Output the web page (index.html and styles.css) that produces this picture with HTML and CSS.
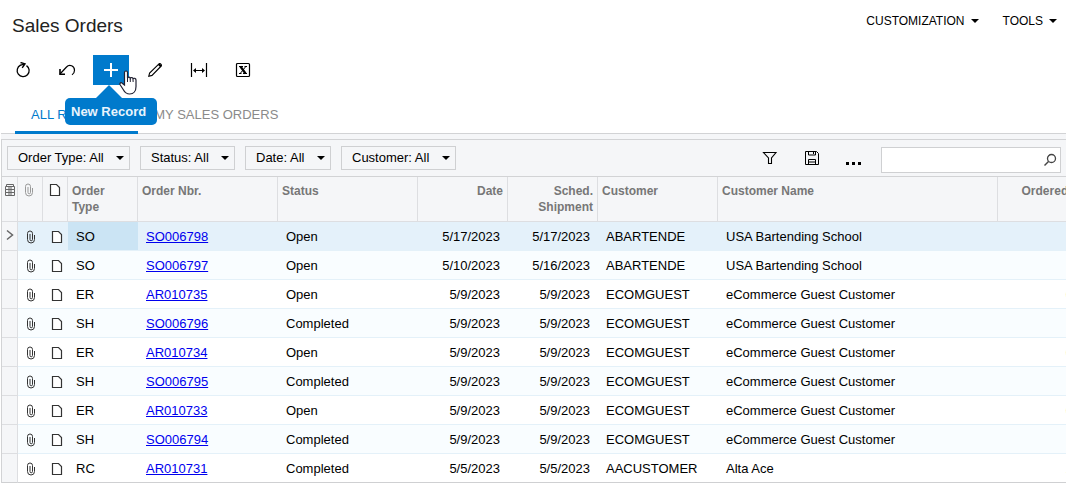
FILE: index.html
```html
<!DOCTYPE html>
<html lang="en">
<head>
    <meta charset="UTF-8">
    <meta name="viewport" content="width=device-width, initial-scale=1.0">
    <title>Sales Orders</title>
    <link rel="stylesheet" href="styles.css">
</head>
<body>
    <!-- shared icons -->
    <svg class="sprite" aria-hidden="true">
        <symbol id="clip" viewBox="0 0 10 14">
            <path d="M1.5 4v5.500a3.300 3.300 0 0 0 7 0V5M6.500 4v5.500a1 1 0 0 1-2.500 0V4M1.500 4.500V3.500a2.500 2.500 0 0 1 5 0V4.500" fill="none" stroke="currentColor"/>
        </symbol>
        <symbol id="note" viewBox="0 0 12 14">
            <path d="M1.500 1.500h6l3 3v8h-9z" fill="#fff" stroke="currentColor" stroke-width="1.200"/>
        </symbol>
    </svg>

    <header class="page-header">
        <h1>Sales Orders</h1>
        <nav class="menus">
            <button class="menu" type="button">CUSTOMIZATION</button>
            <button class="menu" type="button">TOOLS</button>
        </nav>
    </header>

    <div class="toolbar">
        <button class="tool" type="button" aria-label="Refresh">
            <svg width="16" height="16" viewBox="0 0 16 16"><path d="M5.500 3.200A6 6 0 1 0 11.500 3.600" fill="none" stroke="currentColor" stroke-width="1.300"/><path d="M5.500.5 10 1.800 7.200 5.800M5 3.400l4-1.200" fill="none" stroke="currentColor" stroke-width="1.400"/></svg>
        </button>
        <button class="tool" type="button" aria-label="Cancel">
            <svg width="18" height="16" viewBox="0 0 18 16"><path d="M2 12 8.500 5C11.500 1.500 16.500 4 16.500 8.200c0 2-1 3.600-2.500 4.600" fill="none" stroke="currentColor" stroke-width="1.200"/><path d="M2 7v5.200h5" fill="none" stroke="currentColor" stroke-width="1.600"/></svg>
        </button>
        <button class="tool tool-active" type="button" aria-label="New Record" aria-describedby="tip">
            <svg width="16" height="16" viewBox="0 0 16 16"><path d="M8 1v14M1 8h14" stroke="currentColor" stroke-width="2"/></svg>
            <span class="tooltip" id="tip" role="tooltip">New Record</span>
            <svg class="pointer" width="18" height="25" viewBox="0 0 18 25"><path d="M5.500 15V2.500C5.500.5 8.500.5 8.500 2.500V8c.5-1.300 2.600-1.100 2.800.3.600-1.200 2.600-1 2.800.5.700-1 2.900-.6 2.900 1.200v6.500c0 4.500-2.300 7.500-6.300 7.500-3.500 0-5-1.500-6.500-4.500L1 14.500c-.6-1.500 1.200-2.400 2.200-1.300z" fill="#fff" stroke="#223" stroke-width="1.200"/><path d="M8.500 8v4M11.300 8.500V12M14.100 9.500V12" stroke="#223"/></svg>
        </button>
        <button class="tool" type="button" aria-label="Edit">
            <svg width="16" height="16" viewBox="0 0 16 16"><path d="M1.800 14.200l.8-3.200 9.400-9.200c1-1 3.200 1.200 2.200 2.200L5 13.400z" fill="none" stroke="currentColor" stroke-width="1.100"/><path d="M10.800 2.800l2.500 2.500 1.500-1.500-2.500-2.500z" fill="currentColor"/></svg>
        </button>
        <button class="tool" type="button" aria-label="Fit Columns">
            <svg width="18" height="16" viewBox="0 0 18 16"><path d="M1.500 1v14M16.500 1v14M4 8.500h10" fill="none" stroke="currentColor" stroke-width="1.200"/><path d="M3 8.500 6 6v5zM15 8.500 12 6v5z" fill="currentColor"/></svg>
        </button>
        <button class="tool" type="button" aria-label="Export to Excel">
            <svg width="16" height="16" viewBox="0 0 16 16"><rect x="1.500" y="1.500" width="13" height="13" rx="1" fill="none" stroke="currentColor" stroke-width="1.200"/><path d="M4 4.500h4M9.500 4.500H12M4 11.500h2.500M8 11.500h4" stroke="currentColor"/><path d="M5.500 4.500l5 7" stroke="currentColor" stroke-width="2.200"/><path d="M10.800 4.500l-5.600 7" stroke="currentColor"/></svg>
        </button>
    </div>

    <div class="tabs" role="tablist">
        <button class="tab tab-active" type="button" role="tab" aria-selected="true">ALL RECORDS</button>
        <button class="tab" type="button" role="tab" aria-selected="false">MY SALES ORDERS</button>
    </div>

    <main class="grid">
        <div class="filters">
            <div class="filter"><select aria-label="Order Type"><option>Order Type: All</option></select></div>
            <div class="filter"><select aria-label="Status"><option>Status: All</option></select></div>
            <div class="filter"><select aria-label="Date"><option>Date: All</option></select></div>
            <div class="filter"><select aria-label="Customer"><option>Customer: All</option></select></div>
            <div class="filter-tools">
                <button class="filter-tool" type="button" aria-label="Filter Settings">
                    <svg width="16" height="16" viewBox="0 0 16 16"><path d="M1.500 2.500h12.500L9.500 8v5.500H6.500V8z" fill="none" stroke="currentColor" stroke-width="1.100"/></svg>
                </button>
                <button class="filter-tool" type="button" aria-label="Save">
                    <svg width="16" height="16" viewBox="0 0 16 16"><path d="M1.500 1.500h11l2 2v11h-13zM4.500 1.500v3.500h7v-3.500M9.500 2v2M4.500 14.500v-5h7v5M4.500 12h7" fill="none" stroke="currentColor"/></svg>
                </button>
                <button class="filter-tool" type="button" aria-label="More">
                    <svg width="18" height="16" viewBox="0 0 18 16"><path d="M1 12h3v3H1zM7 12h3v3H7zM13 12h3v3h-3z" fill="currentColor"/></svg>
                </button>
            </div>
            <div class="search">
                <input type="text" aria-label="Search">
                <svg width="14" height="14" viewBox="0 0 14 14"><circle cx="8.500" cy="5.500" r="4" fill="none" stroke="currentColor" stroke-width="1.300"/><path d="M5.500 8.500 1.500 12.500" stroke="currentColor" stroke-width="1.500"/></svg>
            </div>
        </div>

        <table>
            <colgroup>
                <col class="w-mark"><col class="w-icon"><col class="w-icon"><col class="w-type"><col class="w-wide"><col class="w-wide">
                <col class="w-date"><col class="w-date"><col class="w-customer"><col class="w-name"><col class="w-qty">
            </colgroup>
            <thead>
                <tr>
                    <th class="mark"><svg width="12" height="14" viewBox="0 0 12 14"><path d="M2.500 3.500v-2h7v2M1.500 3.500h9v3h-9zM1.500 6.500h9v3h-9zM1.500 9.500h9v3h-9zM4 5h4M4 8h4M4 11h4" fill="none" stroke="currentColor"/></svg></th>
                    <th class="icon faded"><svg width="10" height="14"><use href="#clip"/></svg></th>
                    <th class="icon"><svg width="12" height="14"><use href="#note"/></svg></th>
                    <th>Order Type</th>
                    <th>Order Nbr.</th>
                    <th>Status</th>
                    <th class="num">Date</th>
                    <th class="num">Sched. Shipment</th>
                    <th>Customer</th>
                    <th>Customer Name</th>
                    <th class="num">Ordered Qty.</th>
                </tr>
            </thead>
            <tbody>
                <tr class="selected">
                    <td class="mark"><svg width="8" height="12" viewBox="0 0 8 12"><path d="M1 1.500 6.500 6 1 10.500" fill="none" stroke="currentColor" stroke-width="1.500"/></svg></td>
                    <td class="icon"><svg width="10" height="14"><use href="#clip"/></svg></td>
                    <td class="icon"><svg width="12" height="14"><use href="#note"/></svg></td>
                    <td class="current">SO</td><td><a href="#">SO006798</a></td><td>Open</td>
                    <td class="num">5/17/2023</td><td class="num">5/17/2023</td>
                    <td>ABARTENDE</td><td>USA Bartending School</td><td class="num">1.00</td>
                </tr>
                <tr>
                    <td class="mark"></td>
                    <td class="icon"><svg width="10" height="14"><use href="#clip"/></svg></td>
                    <td class="icon"><svg width="12" height="14"><use href="#note"/></svg></td>
                    <td>SO</td><td><a href="#">SO006797</a></td><td>Open</td>
                    <td class="num">5/10/2023</td><td class="num">5/16/2023</td>
                    <td>ABARTENDE</td><td>USA Bartending School</td><td class="num">1.00</td>
                </tr>
                <tr>
                    <td class="mark"></td>
                    <td class="icon"><svg width="10" height="14"><use href="#clip"/></svg></td>
                    <td class="icon"><svg width="12" height="14"><use href="#note"/></svg></td>
                    <td>ER</td><td><a href="#">AR010735</a></td><td>Open</td>
                    <td class="num">5/9/2023</td><td class="num">5/9/2023</td>
                    <td>ECOMGUEST</td><td>eCommerce Guest Customer</td><td class="num">0.00</td>
                </tr>
                <tr>
                    <td class="mark"></td>
                    <td class="icon"><svg width="10" height="14"><use href="#clip"/></svg></td>
                    <td class="icon"><svg width="12" height="14"><use href="#note"/></svg></td>
                    <td>SH</td><td><a href="#">SO006796</a></td><td>Completed</td>
                    <td class="num">5/9/2023</td><td class="num">5/9/2023</td>
                    <td>ECOMGUEST</td><td>eCommerce Guest Customer</td><td class="num">1.00</td>
                </tr>
                <tr>
                    <td class="mark"></td>
                    <td class="icon"><svg width="10" height="14"><use href="#clip"/></svg></td>
                    <td class="icon"><svg width="12" height="14"><use href="#note"/></svg></td>
                    <td>ER</td><td><a href="#">AR010734</a></td><td>Open</td>
                    <td class="num">5/9/2023</td><td class="num">5/9/2023</td>
                    <td>ECOMGUEST</td><td>eCommerce Guest Customer</td><td class="num">0.00</td>
                </tr>
                <tr>
                    <td class="mark"></td>
                    <td class="icon"><svg width="10" height="14"><use href="#clip"/></svg></td>
                    <td class="icon"><svg width="12" height="14"><use href="#note"/></svg></td>
                    <td>SH</td><td><a href="#">SO006795</a></td><td>Completed</td>
                    <td class="num">5/9/2023</td><td class="num">5/9/2023</td>
                    <td>ECOMGUEST</td><td>eCommerce Guest Customer</td><td class="num">1.00</td>
                </tr>
                <tr>
                    <td class="mark"></td>
                    <td class="icon"><svg width="10" height="14"><use href="#clip"/></svg></td>
                    <td class="icon"><svg width="12" height="14"><use href="#note"/></svg></td>
                    <td>ER</td><td><a href="#">AR010733</a></td><td>Open</td>
                    <td class="num">5/9/2023</td><td class="num">5/9/2023</td>
                    <td>ECOMGUEST</td><td>eCommerce Guest Customer</td><td class="num">0.00</td>
                </tr>
                <tr>
                    <td class="mark"></td>
                    <td class="icon"><svg width="10" height="14"><use href="#clip"/></svg></td>
                    <td class="icon"><svg width="12" height="14"><use href="#note"/></svg></td>
                    <td>SH</td><td><a href="#">SO006794</a></td><td>Completed</td>
                    <td class="num">5/9/2023</td><td class="num">5/9/2023</td>
                    <td>ECOMGUEST</td><td>eCommerce Guest Customer</td><td class="num">1.00</td>
                </tr>
                <tr>
                    <td class="mark"></td>
                    <td class="icon"><svg width="10" height="14"><use href="#clip"/></svg></td>
                    <td class="icon"><svg width="12" height="14"><use href="#note"/></svg></td>
                    <td>RC</td><td><a href="#">AR010731</a></td><td>Completed</td>
                    <td class="num">5/5/2023</td><td class="num">5/5/2023</td>
                    <td>AACUSTOMER</td><td>Alta Ace</td><td class="num">2.00</td>
                </tr>
            </tbody>
        </table>
    </main>
</body>
</html>
```
FILE: styles.css
```css
* {
    box-sizing: border-box;
}

body {
    margin: 0;
    background: #fff;
    color: #000;
    font-family: Arial, "Liberation Sans", sans-serif;
    font-size: 13px;
    line-height: 16px;
    overflow-x: hidden;
}

button, select, input {
    font: inherit;
    color: inherit;
    margin: 0;
    padding: 0;
    border: 0;
    background: none;
}

svg {
    display: block;
}

.sprite {
    width: 0;
    height: 0;
    position: absolute;
}

.page-header {
    display: flex;
    justify-content: space-between;
    align-items: flex-start;
    padding: 12px 9px 0 12px;
}

h1 {
    margin: 0;
    font-size: 19px;
    font-weight: normal;
    line-height: 27px;
    color: #222;
}

.menus {
    display: flex;
    gap: 24px;
}

.menu {
    display: flex;
    align-items: center;
    gap: 6px;
    font-size: 12px;
    line-height: 18px;
}

/* drop-down arrow */
.menu::after, .filter::after {
    content: "";
    border: 4px solid transparent;
    border-top-color: #000;
    border-bottom: 0;
}

.toolbar {
    display: flex;
    gap: 8px;
    padding: 16px 5px 13px;
}

.tool {
    position: relative;
    display: flex;
    align-items: center;
    justify-content: center;
    width: 36px;
    height: 30px;
}

.tool-active {
    background: #007acc;
    color: #fff;
}

.tooltip {
    position: absolute;
    top: 43px;
    left: -28px;
    z-index: 1;
    padding: 6px 11px 5px 6px;
    border-radius: 5px;
    background: #007acc;
    color: #e9f4fc;
    font-weight: bold;
    white-space: nowrap;
}

.tooltip::before {
    content: "";
    position: absolute;
    top: -13px;
    left: 31px;
    border: 13px solid transparent;
    border-top: 0;
    border-bottom-color: #007acc;
}

.pointer {
    position: absolute;
    top: 15px;
    left: 26px;
    z-index: 2;
}

.tabs {
    display: flex;
    margin-left: 1px;
    padding-left: 14px;
    border-bottom: 1px solid #d2d3d5;
}

.tab {
    height: 36px;
    margin-bottom: -1px;
    padding: 0 16px;
    border-bottom: 3px solid transparent;
    color: #8a8a8a;
}

.tab-active {
    border-bottom-color: #007acc;
    color: #007acc;
}

.grid {
    padding-left: 1px;
    padding-top: 5px;
    background: linear-gradient(#f5f6f8, #f5f6f8) 1px 0 no-repeat;
    overflow: hidden;
}

.filters {
    display: flex;
    align-items: center;
    gap: 10px;
    height: 37px;
    padding: 0 5px;
    border-top: 1px solid #d2d3d5;
    border-left: 1px solid #d2d3d5;
    background: #f5f6f8;
}

.filter {
    display: grid;
    align-items: center;
}

.filter::after {
    grid-area: 1 / 1;
    justify-self: end;
    margin-right: 6px;
    pointer-events: none;
}

.filter select {
    grid-area: 1 / 1;
    appearance: none;
    height: 24px;
    padding: 0 24px 0 10px;
    border: 1px solid #cfd0d2;
    border-radius: 0;
}

.filter-tools {
    display: flex;
    margin-left: auto;
    gap: 8px;
}

.filter-tool {
    display: flex;
    align-items: center;
    justify-content: center;
    width: 34px;
    height: 30px;
}

.search {
    display: grid;
    align-items: center;
    width: 180px;
    padding-top: 3px;
}

.search input {
    grid-area: 1 / 1;
    width: 100%;
    height: 26px;
    padding: 0 22px 0 6px;
    border: 1px solid #cfd0d2;
    background: #fff;
}

.search svg {
    grid-area: 1 / 1;
    justify-self: end;
    margin-right: 4px;
    color: #444;
}

table {
    width: 1098px;
    table-layout: fixed;
    border-collapse: separate;
    border-spacing: 0;
    border-top: 1px solid #d2d3d5;
    border-left: 1px solid #d2d3d5;
    background: #fff;
}

.w-mark { width: 16px; }
.w-icon { width: 25px; }
.w-type { width: 70px; }
.w-wide { width: 140px; }
.w-date { width: 90px; }
.w-customer { width: 120px; }
.w-name { width: 280px; }
.w-qty { width: 101px; }

th {
    height: 45px;
    padding: 6px 4px;
    border-right: 1px solid #dddee1;
    border-bottom: 1px solid #dddee1;
    background: #f5f6f8;
    color: #777;
    font-size: 12px;
    text-align: left;
    vertical-align: top;
}

td {
    height: 29px;
    padding: 2px 8px 0;
    border-bottom: 1px solid #e4f1f9;
    white-space: nowrap;
}

.num {
    text-align: right;
}

.mark {
    padding-left: 2px;
    padding-right: 0;
    color: #666;
}

td.mark {
    padding: 0 0 2px 4px;
    border-right: 1px solid #dddee1;
    border-bottom-color: #dddee1;
    background: #f5f6f8;
}

.icon {
    color: #333;
    padding-right: 0;
}

th.icon {
    padding-left: 6px;
}

.faded {
    color: #999;
}

td.icon {
    padding-left: 8px;
}

tbody tr:nth-child(even) {
    background: #f9fdff;
}

tbody .selected {
    background: #e4f1fa;
}

.current {
    background: #cbe4f4;
}

tbody tr:last-child td {
    border-bottom-color: #cfd0d2;
}

a {
    color: #0000ee;
}
```
